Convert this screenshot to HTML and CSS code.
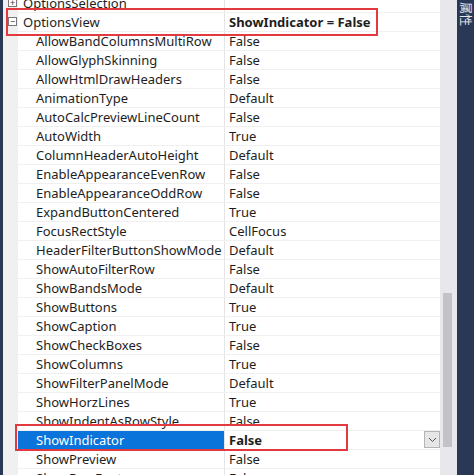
FILE: index.html
```html
<!DOCTYPE html>
<html>
<head>
<meta charset="utf-8">
<link rel="stylesheet" href="styles.css">
</head>
<body>
<div class="frame">
  <div class="edge"></div>
  <div class="grid">
    <div class="rows">
      <div class="row"><div class="gut"><span class="box">+</span></div><div class="name cat">OptionsSelection</div><div class="val"></div></div>
      <div class="row"><div class="gut"><span class="box">−</span></div><div class="name cat">OptionsView</div><div class="val b">ShowIndicator = False</div></div>
      <div class="row"><div class="gut"></div><div class="name">AllowBandColumnsMultiRow</div><div class="val">False</div></div>
      <div class="row"><div class="gut"></div><div class="name">AllowGlyphSkinning</div><div class="val">False</div></div>
      <div class="row"><div class="gut"></div><div class="name">AllowHtmlDrawHeaders</div><div class="val">False</div></div>
      <div class="row"><div class="gut"></div><div class="name">AnimationType</div><div class="val">Default</div></div>
      <div class="row"><div class="gut"></div><div class="name">AutoCalcPreviewLineCount</div><div class="val">False</div></div>
      <div class="row"><div class="gut"></div><div class="name">AutoWidth</div><div class="val">True</div></div>
      <div class="row"><div class="gut"></div><div class="name">ColumnHeaderAutoHeight</div><div class="val">Default</div></div>
      <div class="row"><div class="gut"></div><div class="name">EnableAppearanceEvenRow</div><div class="val">False</div></div>
      <div class="row"><div class="gut"></div><div class="name">EnableAppearanceOddRow</div><div class="val">False</div></div>
      <div class="row"><div class="gut"></div><div class="name">ExpandButtonCentered</div><div class="val">True</div></div>
      <div class="row"><div class="gut"></div><div class="name">FocusRectStyle</div><div class="val">CellFocus</div></div>
      <div class="row"><div class="gut"></div><div class="name">HeaderFilterButtonShowMode</div><div class="val">Default</div></div>
      <div class="row"><div class="gut"></div><div class="name">ShowAutoFilterRow</div><div class="val">False</div></div>
      <div class="row"><div class="gut"></div><div class="name">ShowBandsMode</div><div class="val">Default</div></div>
      <div class="row"><div class="gut"></div><div class="name">ShowButtons</div><div class="val">True</div></div>
      <div class="row"><div class="gut"></div><div class="name">ShowCaption</div><div class="val">True</div></div>
      <div class="row"><div class="gut"></div><div class="name">ShowCheckBoxes</div><div class="val">False</div></div>
      <div class="row"><div class="gut"></div><div class="name">ShowColumns</div><div class="val">True</div></div>
      <div class="row"><div class="gut"></div><div class="name">ShowFilterPanelMode</div><div class="val">Default</div></div>
      <div class="row"><div class="gut"></div><div class="name">ShowHorzLines</div><div class="val">True</div></div>
      <div class="row"><div class="gut"></div><div class="name">ShowIndentAsRowStyle</div><div class="val">False</div></div>
      <div class="row sel"><div class="gut"></div><div class="name">ShowIndicator</div><div class="val b">False<span class="drop"><svg width="9" height="6" viewBox="0 0 9 6"><path d="M1 1 L4.5 4.5 L8 1" fill="none" stroke="#555" stroke-width="1"/></svg></span></div></div>
      <div class="row"><div class="gut"></div><div class="name">ShowPreview</div><div class="val">False</div></div>
      <div class="row"><div class="gut"></div><div class="name">ShowRowFooter</div><div class="val">False</div></div>
    </div>
    <div class="mark mark1"></div>
    <div class="mark mark2"></div>
  </div>
  <div class="scroll"><div class="thumb"></div></div>
  <div class="tab"><span class="tabtext">属性</span></div>
</div>
</body>
</html>
```
FILE: styles.css
```css
html, body {
  margin: 0;
  padding: 0;
  background: #fff;
}
.frame {
  display: flex;
  width: 474px;
  height: 475px;
  overflow: hidden;
  font-family: "Noto Sans", "Noto Sans CJK SC", sans-serif;
  font-size: 13px;
  color: #1e1e1e;
}
.edge {
  width: 3px;
  flex: none;
  background: #293955;
}
.grid {
  position: relative;
  flex: none;
  width: 437px;
  overflow: hidden;
  background: #fff;
}
.rows {
  margin-top: -6px;
}
.row {
  display: flex;
  height: 19px;
  line-height: 18px;
  box-sizing: border-box;
  border-bottom: 1px solid #f0f0f0;
}
.gut {
  width: 15px;
  flex: none;
  background: #f0f0f0;
  position: relative;
}
.box {
  position: absolute;
  left: 5px;
  top: 4px;
  width: 7px;
  height: 7px;
  border: 1px solid #777;
  font-size: 9px;
  line-height: 7px;
  text-align: center;
  color: #333;
  background: #fff;
}
.name {
  width: 207px;
  flex: none;
  padding-left: 18px;
  box-sizing: border-box;
  border-right: 1px solid #e4e4e4;
  white-space: nowrap;
  overflow: hidden;
}
.name.cat {
  padding-left: 5px;
}
.val {
  flex: 1;
  padding-left: 4px;
  display: flex;
  align-items: flex-start;
  white-space: nowrap;
}
.b {
  font-weight: bold;
}
.sel .name {
  background: #0a74da;
  color: #fff;
}
.drop {
  margin-left: auto;
  width: 16px;
  height: 17px;
  box-sizing: border-box;
  border: 1px solid #b4b4b4;
  background: #e6e6e6;
  display: flex;
  align-items: center;
  justify-content: center;
}
.mark {
  position: absolute;
  border: 2px solid #e23a3f;
  box-sizing: border-box;
}
.mark1 {
  left: 3px;
  top: 8px;
  width: 372px;
  height: 28px;
}
.mark2 {
  left: 12px;
  top: 424px;
  width: 333px;
  height: 27px;
}
.scroll {
  width: 17px;
  flex: none;
  background: #e8e8ec;
  position: relative;
}
.thumb {
  position: absolute;
  left: 3px;
  top: 293px;
  width: 9px;
  height: 154px;
  background: #c2c3c9;
}
.tab {
  flex: 1;
  background: #293955;
  display: flex;
  justify-content: center;
  padding-top: 2px;
}
.tabtext {
  writing-mode: vertical-rl;
  text-orientation: sideways;
  color: #e6e8ee;
  font-size: 12px;
  line-height: 14px;
  font-family: "Noto Sans CJK SC", sans-serif;
  height: 30px;
}
```
